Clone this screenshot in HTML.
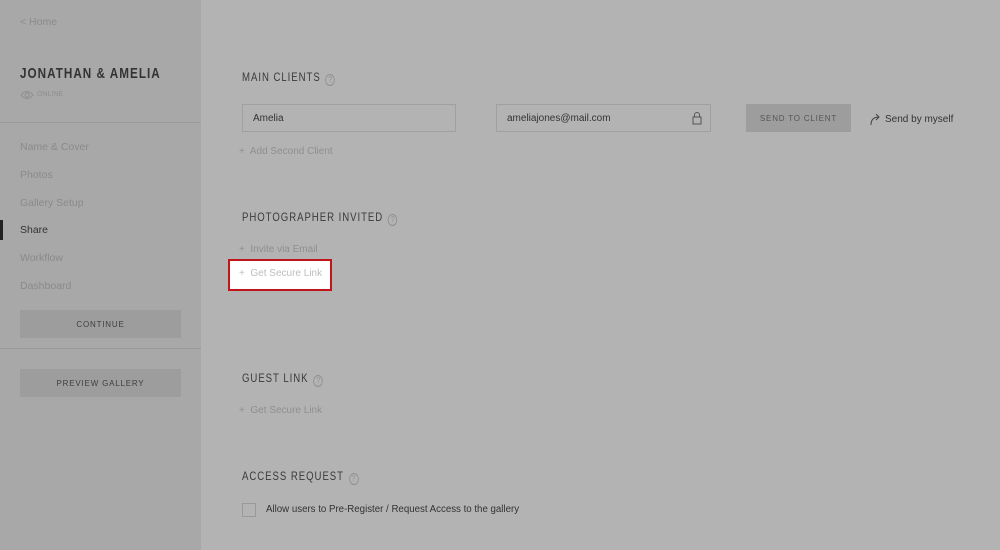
<!DOCTYPE html>
<html><head><meta charset="utf-8"><style>
*{margin:0;padding:0;box-sizing:border-box}
body{width:1000px;height:550px;position:relative;overflow:hidden;background:#b3b3b3;font-family:"Liberation Sans",sans-serif;}
.a{position:absolute;white-space:nowrap}
#side{position:absolute;left:0;top:0;width:201px;height:550px;background:#a8a8a8}
.nav{color:#8a8a8a;font-size:10.5px;left:20px}
.h{color:#3a3a3a;font-size:12px;letter-spacing:1.2px;transform:scaleX(.8);transform-origin:left}
.btn{background:#9d9d9d;color:#3e3e3e;font-size:8px;letter-spacing:.8px;text-align:center}
.q{display:inline-block;width:12px;height:12px;border:1px solid #8e8e8e;border-radius:50%;font-size:8px;color:#8e8e8e;text-align:center;line-height:10px;vertical-align:-1px;margin-left:6px;letter-spacing:0}
.add{color:#8f8f8f;font-size:10px;left:239px}
.inp{border:1px solid #a0a0a0;height:28px;color:#333;font-size:10px;padding:8px 10px}
</style></head><body>
<div id="side"></div>
<div class="a nav" style="top:16px">&lt; Home</div>
<div class="a h" style="left:20px;top:65px;font-size:15px;color:#333;font-weight:bold;letter-spacing:1.3px;transform:scaleX(.78)">JONATHAN &amp; AMELIA</div>
<svg class="a" style="left:20px;top:90px" width="14" height="10" viewBox="0 0 14 10"><path d="M1 5Q7 -2 13 5Q7 12 1 5Z" fill="none" stroke="#8f8f8f"/><circle cx="7" cy="5" r="2" fill="none" stroke="#8f8f8f"/></svg>
<div class="a" style="left:37px;top:91px;font-size:7px;color:#8f8f8f">ONLINE</div>
<div class="a" style="left:0;top:122px;width:201px;height:1px;background:#9a9a9a"></div>
<div class="a nav" style="top:141px">Name &amp; Cover</div>
<div class="a nav" style="top:169px">Photos</div>
<div class="a nav" style="top:197px">Gallery Setup</div>
<div class="a" style="left:0;top:220px;width:3px;height:20px;background:#222"></div>
<div class="a nav" style="top:224px;color:#333">Share</div>
<div class="a nav" style="top:252px">Workflow</div>
<div class="a nav" style="top:280px">Dashboard</div>
<div class="a btn" style="left:20px;top:310px;width:161px;height:28px;line-height:29px">CONTINUE</div>
<div class="a" style="left:0;top:348px;width:201px;height:1px;background:#9a9a9a"></div>
<div class="a btn" style="left:20px;top:369px;width:161px;height:28px;line-height:29px">PREVIEW GALLERY</div>

<div class="a h" style="left:242px;top:70px">MAIN CLIENTS<span class="q">?</span></div>
<div class="a inp" style="left:242px;top:104px;width:214px">Amelia</div>
<div class="a inp" style="left:496px;top:104px;width:215px">ameliajones@mail.com</div>
<svg class="a" style="left:692px;top:111px" width="10" height="14" viewBox="0 0 10 14"><path d="M2.5 6V4a2.5 2.5 0 0 1 5 0v2" fill="none" stroke="#555"/><rect x="1" y="6" width="8" height="7" fill="none" stroke="#555"/></svg>
<div class="a btn" style="left:746px;top:104px;width:105px;height:28px;line-height:29px;color:#555">SEND TO CLIENT</div>
<svg class="a" style="left:869px;top:112px" width="12" height="14" viewBox="0 0 12 14"><path d="M2 13Q2 5 10 5M7 2l3 3-3 3" fill="none" stroke="#444"/></svg>
<div class="a" style="left:885px;top:114px;font-size:10px;color:#333">Send by myself</div>
<div class="a add" style="top:146px">+&nbsp; Add Second Client</div>

<div class="a h" style="left:242px;top:210px">PHOTOGRAPHER INVITED<span class="q">?</span></div>
<div class="a add" style="top:244px">+&nbsp; Invite via Email</div>
<div class="a" style="left:228px;top:259px;width:104px;height:32px;background:#fff;border:2px solid #c0161b"></div>
<div class="a add" style="top:268px;color:#bdbdbd">+&nbsp; Get Secure Link</div>

<div class="a h" style="left:242px;top:371px">GUEST LINK<span class="q">?</span></div>
<div class="a add" style="top:405px">+&nbsp; Get Secure Link</div>

<div class="a h" style="left:242px;top:469px">ACCESS REQUEST<span class="q">?</span></div>
<div class="a" style="left:242px;top:503px;width:14px;height:14px;border:1px solid #999"></div>
<div class="a" style="left:266px;top:504px;font-size:9.7px;color:#333">Allow users to Pre-Register / Request Access to the gallery</div>
</body></html>
